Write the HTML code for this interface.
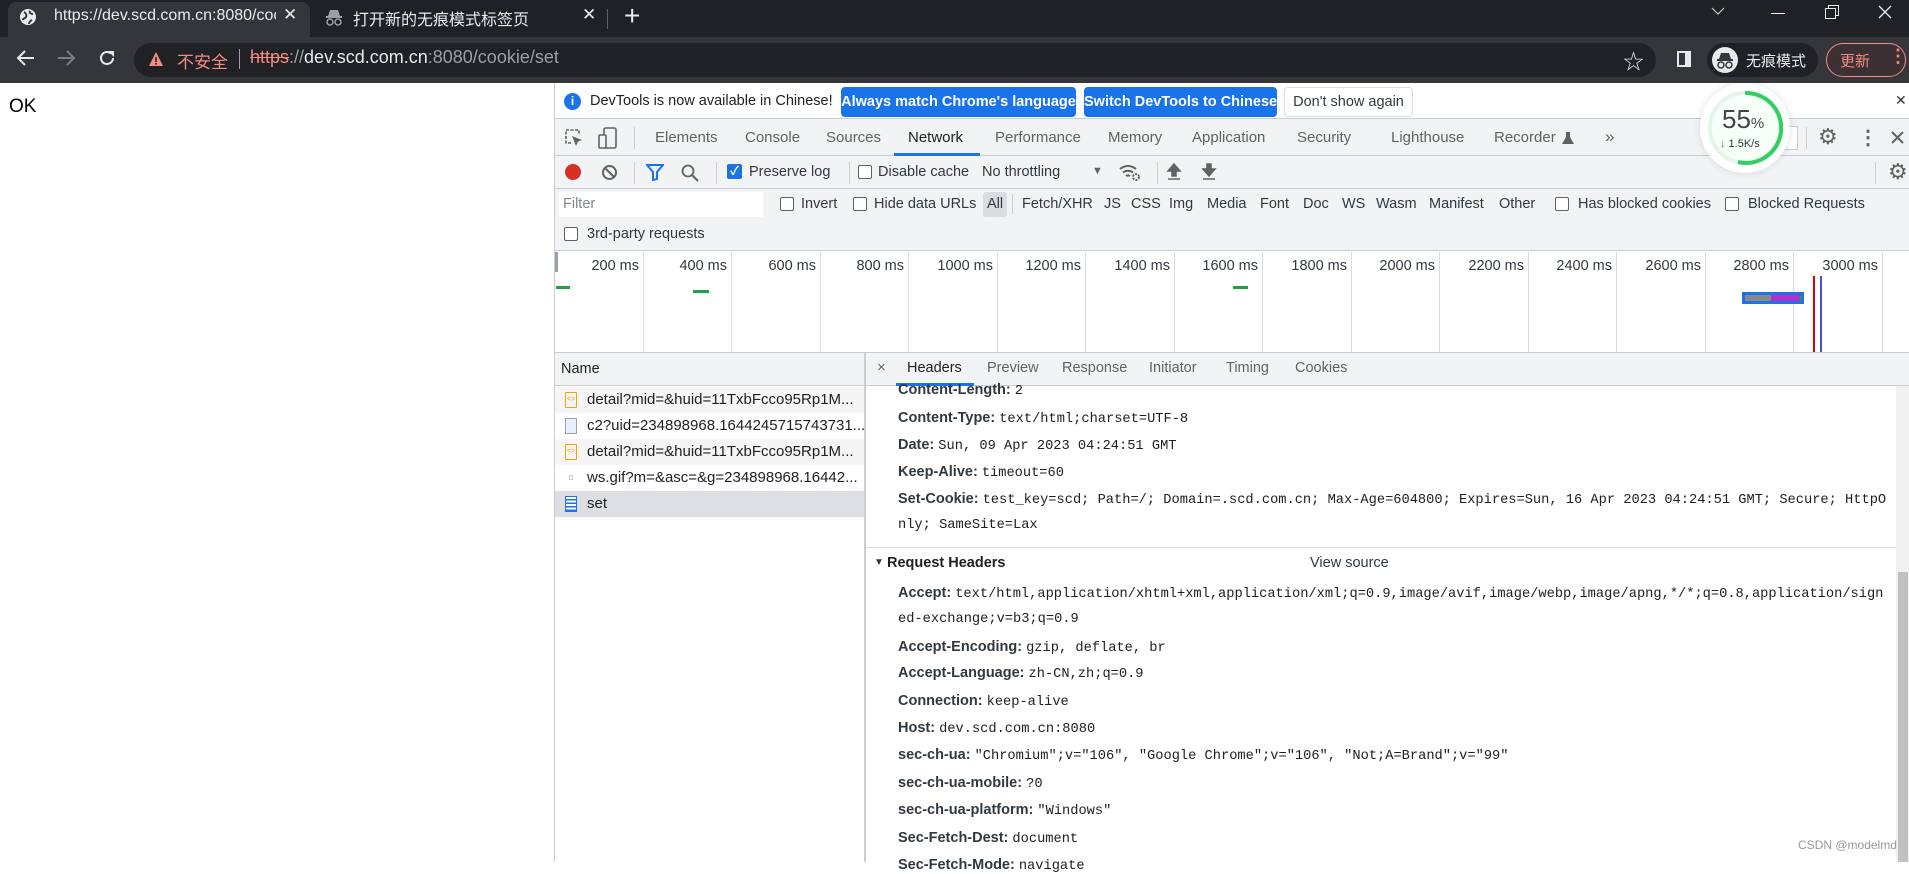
<!DOCTYPE html>
<html><head><meta charset="utf-8"><style>
*{box-sizing:border-box;margin:0;padding:0}
body{width:1909px;height:862px;overflow:hidden;position:relative;background:#fff;font-family:"Liberation Sans","Noto Sans CJK SC",sans-serif;color:#202124}
.a{position:absolute;white-space:nowrap}
.dt{font-size:14.5px;color:#303942}
.tab{font-size:15px;color:#5f6368}
.cb{position:absolute;width:14px;height:14px;border:1.5px solid #5f6368;border-radius:2px;background:#fff}
.hn{font-weight:bold;font-size:14.5px;color:#303942}
.hv{font-family:"Liberation Mono",monospace;font-size:13.7px;color:#202124;font-weight:normal}
.row{position:absolute;left:555px;width:309px;height:26px;font-size:15px;color:#202124;white-space:nowrap;overflow:hidden}
.row span{position:absolute;left:32px;top:4px;white-space:nowrap}
.gl{position:absolute;top:252px;height:100px;width:1px;background:#dadce0}
.tl{position:absolute;top:258px;font-size:14.5px;color:#303942;text-align:right;width:100px}
</style></head><body>
<!-- tab strip -->
<div class="a" style="left:0;top:0;width:1909px;height:37px;background:#202124"></div>
<div class="a" style="left:8px;top:2px;width:302px;height:35px;background:#35363a;border-radius:8px 8px 0 0"></div>
<svg class="a" style="left:19px;top:8px" width="18" height="18" viewBox="0 0 18 18"><circle cx="9" cy="9" r="8" fill="#e8eaed"/><path d="M5 4c2 1 3 3 2 5s-3 1-3 3M11 3c-1 2 1 3 3 3M10 16c0-2 1-3 3-4" stroke="#35363a" stroke-width="2" fill="none"/></svg>
<div class="a" style="left:54px;top:7px;font-size:16px;color:#e8eaed;width:222px;overflow:hidden">https://dev.scd.com.cn:8080/cookie/set</div>
<div class="a" style="left:283px;top:5px;font-size:17px;color:#e8eaed">✕</div>
<svg class="a" style="left:325px;top:9px" width="18" height="17" viewBox="0 0 18 17"><path d="M5 1h8l2 6H3z" fill="#9aa0a6"/><rect x="1" y="7" width="16" height="2" fill="#9aa0a6"/><circle cx="5" cy="13" r="3" stroke="#9aa0a6" stroke-width="1.5" fill="none"/><circle cx="13" cy="13" r="3" stroke="#9aa0a6" stroke-width="1.5" fill="none"/></svg>
<div class="a" style="left:353px;top:6px;font-size:16px;color:#e8eaed">打开新的无痕模式标签页</div>
<div class="a" style="left:582px;top:5px;font-size:17px;color:#e8eaed">✕</div>
<div class="a" style="left:607px;top:9px;width:1px;height:20px;background:#5f6368"></div>
<div class="a" style="left:624px;top:0px;font-size:28px;color:#e8eaed;font-weight:300">+</div>
<svg class="a" style="left:1711px;top:6px" width="14" height="10"><path d="M1 2l6 6 6-6" stroke="#c8c8c8" fill="none" stroke-width="1.2"/></svg>
<div class="a" style="left:1771px;top:13px;width:14px;height:1.3px;background:#e8eaed"></div>
<svg class="a" style="left:1824px;top:4px" width="16" height="16"><rect x="1.5" y="4.5" width="10" height="10" stroke="#e8eaed" fill="none"/><path d="M4.5 4.5V1.5h10v10h-3" stroke="#e8eaed" fill="none"/></svg>
<svg class="a" style="left:1878px;top:5px" width="14" height="14"><path d="M1 1l12 12M13 1L1 13" stroke="#e8eaed" stroke-width="1.3"/></svg>
<!-- toolbar -->
<div class="a" style="left:0;top:37px;width:1909px;height:46px;background:#35363a"></div>
<svg class="a" style="left:16px;top:49px" width="20" height="18"><path d="M18 9H3M9 2L2 9l7 7" stroke="#e8eaed" stroke-width="2" fill="none"/></svg>
<svg class="a" style="left:56px;top:49px" width="20" height="18"><path d="M2 9h15M11 2l7 7-7 7" stroke="#7a7d81" stroke-width="2" fill="none"/></svg>
<svg class="a" style="left:97px;top:48px" width="20" height="20"><path d="M16 10a6 6 0 1 1-2-4.5" stroke="#e8eaed" stroke-width="2" fill="none"/><path d="M11 3h6v6z" fill="#e8eaed"/></svg>
<div class="a" style="left:134px;top:43px;width:1522px;height:34px;background:#202124;border-radius:17px"></div>
<svg class="a" style="left:148px;top:51px" width="16" height="16"><path d="M8 1L15 15H1z" fill="#f28b82"/><rect x="7.2" y="6" width="1.6" height="5" fill="#202124"/><rect x="7.2" y="12" width="1.6" height="1.6" fill="#202124"/></svg>
<div class="a" style="left:177px;top:48px;font-size:17px;color:#f28b82">不安全</div>
<div class="a" style="left:239px;top:49px;width:1px;height:20px;background:#9aa0a6"></div>
<div class="a" style="left:250px;top:47px;font-size:18px;color:#9aa0a6"><span style="color:#f28b82;text-decoration:line-through">https</span>://<span style="color:#e8eaed">dev.scd.com.cn</span>:8080/cookie/set</div>
<div class="a" style="left:1623px;top:46px;font-size:21px;color:#e8eaed">☆</div>
<div class="a" style="left:1677px;top:51px;width:14px;height:16px;border:2px solid #e8eaed;border-right-width:6px"></div>
<div class="a" style="left:1707px;top:43px;width:111px;height:34px;background:#202124;border-radius:17px"></div>
<div class="a" style="left:1712px;top:47px;width:26px;height:26px;background:#e8eaed;border-radius:50%"></div>
<svg class="a" style="left:1716px;top:52px" width="18" height="17" viewBox="0 0 18 17"><path d="M5 1h8l2 6H3z" fill="#35363a"/><rect x="1" y="7" width="16" height="2" fill="#35363a"/><circle cx="5" cy="13" r="3" stroke="#35363a" stroke-width="1.5" fill="none"/><circle cx="13" cy="13" r="3" stroke="#35363a" stroke-width="1.5" fill="none"/></svg>
<div class="a" style="left:1746px;top:50px;font-size:15px;color:#e8eaed">无痕模式</div>
<div class="a" style="left:1826px;top:43px;width:80px;height:34px;border:1.5px solid #f28b82;border-radius:17px;background:#3c3034"></div>
<div class="a" style="left:1840px;top:50px;font-size:15px;color:#f28b82">更新</div>
<div class="a" style="left:1889px;top:46px;font-size:18px;color:#f28b82;font-weight:bold">⋮</div>
<!-- page -->
<div class="a" style="left:9px;top:96px;font-size:19px;color:#000">OK</div>
<div class="a" style="left:554px;top:83px;width:1px;height:779px;background:#cbcdd1"></div>
<!-- devtools -->
<div class="a" style="left:555px;top:83px;width:1354px;height:36px;background:#fff;border-bottom:1px solid #cacdd1"></div>
<div class="a" style="left:564px;top:93px;width:17px;height:17px;border-radius:50%;background:#1a73e8;color:#fff;font-size:12px;font-weight:bold;text-align:center;line-height:17px">i</div>
<div class="a dt" style="left:590px;top:93px;color:#202124">DevTools is now available in Chinese!</div>
<div class="a" style="left:841px;top:87px;width:235px;height:30px;background:#1a73e8;border-radius:4px;color:#fff;font-weight:bold;font-size:14.5px;text-align:center;line-height:30px">Always match Chrome's language</div>
<div class="a" style="left:1084px;top:87px;width:193px;height:30px;background:#1a73e8;border-radius:4px;color:#fff;font-weight:bold;font-size:14.5px;text-align:center;line-height:30px">Switch DevTools to Chinese</div>
<div class="a" style="left:1284px;top:87px;width:129px;height:30px;border:1px solid #dadce0;border-radius:4px;color:#303942;font-size:14.5px;text-align:center;line-height:28px">Don't show again</div>
<div class="a" style="left:1895px;top:92px;font-size:14px;color:#303942">✕</div>
<!-- tabs bar -->
<div class="a" style="left:555px;top:119px;width:1354px;height:37px;background:#f1f3f4;border-bottom:1px solid #cacdd1"></div>
<svg class="a" style="left:564px;top:128px" width="20" height="20"><path d="M7 15H2V2h13v5" stroke="#5f6368" stroke-width="1.6" fill="none" stroke-dasharray="3 1.5"/><path d="M8 8l10 4-4 1.5L12 18z" fill="#5f6368"/></svg>
<svg class="a" style="left:598px;top:127px" width="20" height="22"><rect x="6" y="1" width="12" height="20" rx="1.5" stroke="#5f6368" stroke-width="1.6" fill="none"/><rect x="1" y="8" width="7" height="13" rx="1" stroke="#5f6368" stroke-width="1.6" fill="#f1f3f4"/></svg>
<div class="a" style="left:634px;top:127px;width:1px;height:22px;background:#cacdd1"></div>
<div class="a tab" style="left:655px;top:129px">Elements</div>
<div class="a tab" style="left:745px;top:129px">Console</div>
<div class="a tab" style="left:826px;top:129px">Sources</div>
<div class="a tab" style="left:908px;top:129px;color:#202124">Network</div>
<div class="a" style="left:894px;top:153px;width:86px;height:3px;background:#1a73e8"></div>
<div class="a tab" style="left:995px;top:129px">Performance</div>
<div class="a tab" style="left:1108px;top:129px">Memory</div>
<div class="a tab" style="left:1192px;top:129px">Application</div>
<div class="a tab" style="left:1297px;top:129px">Security</div>
<div class="a tab" style="left:1391px;top:129px">Lighthouse</div>
<div class="a tab" style="left:1494px;top:129px">Recorder</div>
<svg class="a" style="left:1562px;top:131px" width="12" height="14"><path d="M4 1h4v5l4 7H0l4-7z" fill="#5f6368"/></svg>
<div class="a tab" style="left:1605px;top:127px;font-size:17px">»</div>
<div class="a" style="left:1764px;top:126px;width:34px;height:24px;border:1px solid #cacdd1;background:#fff"></div>
<div class="a" style="left:1806px;top:127px;width:1px;height:22px;background:#cacdd1"></div>
<div class="a" style="left:1818px;top:124px;font-size:22px;color:#5f6368">⚙</div>
<div class="a" style="left:1858px;top:125px;font-size:20px;color:#5f6368;font-weight:bold">⋮</div>
<svg class="a" style="left:1891px;top:131px" width="13" height="13"><path d="M1 1l11 11M12 1L1 12" stroke="#5f6368" stroke-width="2"/></svg>
<!-- network toolbar -->
<div class="a" style="left:555px;top:156px;width:1354px;height:33px;background:#f1f3f4;border-bottom:1px solid #cacdd1"></div>
<div class="a" style="left:565px;top:164px;width:16px;height:16px;border-radius:50%;background:#d93025"></div>
<svg class="a" style="left:601px;top:164px" width="17" height="17"><circle cx="8.5" cy="8.5" r="6.5" stroke="#5f6368" stroke-width="2" fill="none"/><path d="M4 4l9 9" stroke="#5f6368" stroke-width="2"/></svg>
<div class="a" style="left:634px;top:162px;width:1px;height:22px;background:#cacdd1"></div>
<svg class="a" style="left:646px;top:164px" width="18" height="17"><path d="M1 1h16l-6 7v7l-4 1V8z" stroke="#1a73e8" stroke-width="2" fill="none"/></svg>
<svg class="a" style="left:681px;top:164px" width="18" height="18"><circle cx="7" cy="7" r="5.5" stroke="#5f6368" stroke-width="1.8" fill="none"/><path d="M11 11l6 6" stroke="#5f6368" stroke-width="2"/></svg>
<div class="a" style="left:716px;top:162px;width:1px;height:22px;background:#cacdd1"></div>
<div class="a" style="left:727px;top:164px;width:15px;height:15px;background:#1a73e8;border-radius:2px;color:#fff;font-size:12px;line-height:15px;text-align:center;font-weight:bold">✓</div>
<div class="a dt" style="left:749px;top:164px">Preserve log</div>
<div class="a" style="left:849px;top:162px;width:1px;height:22px;background:#cacdd1"></div>
<div class="cb" style="left:858px;top:165px"></div>
<div class="a dt" style="left:878px;top:164px">Disable cache</div>
<div class="a dt" style="left:982px;top:164px">No throttling</div>
<div class="a" style="left:1092px;top:165px;font-size:11px;color:#5f6368">▼</div>
<svg class="a" style="left:1118px;top:162px" width="24" height="20"><path d="M2 7a12 12 0 0 1 16 0M5 10.5a8 8 0 0 1 10 0M8 14a3.5 3.5 0 0 1 4 0" stroke="#5f6368" stroke-width="2" fill="none"/><circle cx="18" cy="15" r="3" stroke="#5f6368" stroke-width="2" fill="none" stroke-dasharray="2 1.2"/></svg>
<div class="a" style="left:1157px;top:162px;width:1px;height:22px;background:#cacdd1"></div>
<svg class="a" style="left:1166px;top:163px" width="16" height="18"><path d="M8 1L2 8h4v5h4V8h4z M2 16h12" stroke="#5f6368" stroke-width="1.5" fill="#5f6368"/></svg>
<svg class="a" style="left:1201px;top:163px" width="16" height="18"><path d="M8 13L2 6h4V1h4v5h4z M2 16h12" stroke="#5f6368" stroke-width="1.5" fill="#5f6368"/></svg>
<div class="a" style="left:1875px;top:162px;width:1px;height:22px;background:#cacdd1"></div>
<div class="a" style="left:1888px;top:159px;font-size:22px;color:#5f6368">⚙</div>
<!-- filter rows -->
<div class="a" style="left:555px;top:189px;width:1354px;height:62px;background:#f1f3f4;border-bottom:1px solid #cacdd1"></div>
<div class="a" style="left:559px;top:192px;width:204px;height:25px;background:#fff"></div>
<div class="a dt" style="left:563px;top:196px;color:#80868b">Filter</div>
<div class="cb" style="left:780px;top:197px"></div><div class="a dt" style="left:801px;top:196px">Invert</div>
<div class="cb" style="left:853px;top:197px"></div><div class="a dt" style="left:874px;top:196px">Hide data URLs</div>
<div class="a" style="left:983px;top:192px;width:24px;height:25px;background:#dadce0;border-radius:3px"></div>
<div class="a dt" style="left:987px;top:196px">All</div>
<div class="a" style="left:1012px;top:194px;width:1px;height:20px;background:#cacdd1"></div>
<div class="a dt" style="left:1022px;top:196px">Fetch/XHR</div>
<div class="a dt" style="left:1104px;top:196px">JS</div>
<div class="a dt" style="left:1131px;top:196px">CSS</div>
<div class="a dt" style="left:1169px;top:196px">Img</div>
<div class="a dt" style="left:1207px;top:196px">Media</div>
<div class="a dt" style="left:1260px;top:196px">Font</div>
<div class="a dt" style="left:1303px;top:196px">Doc</div>
<div class="a dt" style="left:1342px;top:196px">WS</div>
<div class="a dt" style="left:1376px;top:196px">Wasm</div>
<div class="a dt" style="left:1429px;top:196px">Manifest</div>
<div class="a dt" style="left:1499px;top:196px">Other</div>
<div class="cb" style="left:1555px;top:197px"></div><div class="a dt" style="left:1578px;top:196px">Has blocked cookies</div>
<div class="cb" style="left:1725px;top:197px"></div><div class="a dt" style="left:1748px;top:196px">Blocked Requests</div>
<div class="cb" style="left:564px;top:227px"></div><div class="a dt" style="left:587px;top:226px">3rd-party requests</div>
<!-- timeline -->
<div class="a" style="left:555px;top:252px;width:3px;height:20px;background:#9aa0a6"></div>
<div class="gl" style="left:643px"></div><div class="gl" style="left:731px"></div><div class="gl" style="left:820px"></div><div class="gl" style="left:908px"></div><div class="gl" style="left:997px"></div><div class="gl" style="left:1085px"></div><div class="gl" style="left:1174px"></div><div class="gl" style="left:1262px"></div><div class="gl" style="left:1351px"></div><div class="gl" style="left:1439px"></div><div class="gl" style="left:1528px"></div><div class="gl" style="left:1616px"></div><div class="gl" style="left:1705px"></div><div class="gl" style="left:1793px"></div><div class="gl" style="left:1882px"></div>
<div class="tl" style="left:539px">200 ms</div><div class="tl" style="left:627px">400 ms</div><div class="tl" style="left:716px">600 ms</div><div class="tl" style="left:804px">800 ms</div><div class="tl" style="left:893px">1000 ms</div><div class="tl" style="left:981px">1200 ms</div><div class="tl" style="left:1070px">1400 ms</div><div class="tl" style="left:1158px">1600 ms</div><div class="tl" style="left:1247px">1800 ms</div><div class="tl" style="left:1335px">2000 ms</div><div class="tl" style="left:1424px">2200 ms</div><div class="tl" style="left:1512px">2400 ms</div><div class="tl" style="left:1601px">2600 ms</div><div class="tl" style="left:1689px">2800 ms</div><div class="tl" style="left:1778px">3000 ms</div>
<div class="a" style="left:556px;top:286px;width:14px;height:3px;background:#1ea446"></div>
<div class="a" style="left:693px;top:290px;width:16px;height:3px;background:#1ea446"></div>
<div class="a" style="left:1233px;top:286px;width:15px;height:3px;background:#1ea446"></div>
<div class="a" style="left:1742px;top:292px;width:62px;height:12px;background:#1a73e8"></div>
<div class="a" style="left:1745px;top:295px;width:26px;height:6px;background:#888"></div>
<div class="a" style="left:1771px;top:295px;width:29px;height:6px;background:#b52fcc"></div>
<div class="a" style="left:1800px;top:295px;width:2px;height:6px;background:#1ea446"></div>
<div class="a" style="left:1813px;top:276px;width:1.5px;height:76px;background:#d00"></div>
<div class="a" style="left:1820px;top:276px;width:1.5px;height:76px;background:#4455cc"></div>
<!-- lower panel -->
<div class="a" style="left:555px;top:352px;width:1354px;height:1px;background:#cacdd1"></div>
<div class="a" style="left:555px;top:353px;width:309px;height:33px;background:#f1f3f4;border-bottom:1px solid #cacdd1"></div>
<div class="a dt" style="left:561px;top:361px;color:#202124">Name</div>
<div class="a" style="left:864px;top:353px;width:2px;height:509px;background:#cacdd1"></div>
<div class="row" style="top:387px;background:#f5f5f5"><span>detail?mid=&amp;huid=11TxbFcco95Rp1M...</span></div>
<div class="row" style="top:413px;background:#fff"><span>c2?uid=234898968.1644245715743731...</span></div>
<div class="row" style="top:439px;background:#f5f5f5"><span>detail?mid=&amp;huid=11TxbFcco95Rp1M...</span></div>
<div class="row" style="top:465px;background:#fff"><span>ws.gif?m=&amp;asc=&amp;g=234898968.16442...</span></div>
<div class="row" style="top:491px;background:#dcdee2"><span>set</span></div>
<div class="a" style="left:565px;top:392px;width:12px;height:16px;border:1.5px solid #f2a600;border-radius:1px;font-size:7px;color:#f2a600;text-align:center;line-height:13px">&lt;&gt;</div>
<div class="a" style="left:565px;top:418px;width:12px;height:16px;border:1.5px solid #9aa0a6;background:#e8f0fe"></div>
<div class="a" style="left:565px;top:444px;width:12px;height:16px;border:1.5px solid #f2a600;border-radius:1px;font-size:7px;color:#f2a600;text-align:center;line-height:13px">&lt;&gt;</div>
<div class="a" style="left:569px;top:475px;width:4px;height:5px;border:1px solid #ccc"></div>
<div class="a" style="left:565px;top:496px;width:12px;height:16px;border:1.5px solid #1a73e8;background:repeating-linear-gradient(#fff 0 2px,#1a73e8 2px 3.5px)"></div>
<!-- details tabs -->
<div class="a" style="left:866px;top:353px;width:1043px;height:33px;background:#f1f3f4;border-bottom:1px solid #cacdd1"></div>
<div class="a" style="left:877px;top:359px;font-size:15px;color:#5f6368">×</div>
<div class="a tab" style="left:907px;top:360px;color:#202124;font-size:14.5px">Headers</div>
<div class="a" style="left:896px;top:383px;width:78px;height:3px;background:#1a73e8"></div>
<div class="a tab" style="left:987px;top:360px;font-size:14.5px">Preview</div>
<div class="a tab" style="left:1062px;top:360px;font-size:14.5px">Response</div>
<div class="a tab" style="left:1149px;top:360px;font-size:14.5px">Initiator</div>
<div class="a tab" style="left:1226px;top:360px;font-size:14.5px">Timing</div>
<div class="a tab" style="left:1295px;top:360px;font-size:14.5px">Cookies</div>
<!-- headers content -->
<div class="a hn" style="left:898px;top:382px">Content-Length: <span class="hv">2</span></div>
<div class="a hn" style="left:898px;top:410px">Content-Type: <span class="hv">text/html;charset=UTF-8</span></div>
<div class="a hn" style="left:898px;top:437px">Date: <span class="hv">Sun, 09 Apr 2023 04:24:51 GMT</span></div>
<div class="a hn" style="left:898px;top:464px">Keep-Alive: <span class="hv">timeout=60</span></div>
<div class="a hn" style="left:898px;top:491px">Set-Cookie: <span class="hv">test_key=scd; Path=/; Domain=.scd.com.cn; Max-Age=604800; Expires=Sun, 16 Apr 2023 04:24:51 GMT; Secure; HttpO</span></div>
<div class="a hv" style="left:898px;top:518px">nly; SameSite=Lax</div>
<div class="a" style="left:866px;top:547px;width:1030px;height:1px;background:#dadce0"></div>
<div class="a" style="left:874px;top:557px;font-size:10px;color:#303942">▼</div>
<div class="a hn" style="left:887px;top:555px;color:#202124">Request Headers</div>
<div class="a dt" style="left:1310px;top:555px">View source</div>
<div class="a hn" style="left:898px;top:585px">Accept: <span class="hv">text/html,application/xhtml+xml,application/xml;q=0.9,image/avif,image/webp,image/apng,*/*;q=0.8,application/sign</span></div>
<div class="a hv" style="left:898px;top:612px">ed-exchange;v=b3;q=0.9</div>
<div class="a hn" style="left:898px;top:639px">Accept-Encoding: <span class="hv">gzip, deflate, br</span></div>
<div class="a hn" style="left:898px;top:665px">Accept-Language: <span class="hv">zh-CN,zh;q=0.9</span></div>
<div class="a hn" style="left:898px;top:693px">Connection: <span class="hv">keep-alive</span></div>
<div class="a hn" style="left:898px;top:720px">Host: <span class="hv">dev.scd.com.cn:8080</span></div>
<div class="a hn" style="left:898px;top:747px">sec-ch-ua: <span class="hv">"Chromium";v="106", "Google Chrome";v="106", "Not;A=Brand";v="99"</span></div>
<div class="a hn" style="left:898px;top:775px">sec-ch-ua-mobile: <span class="hv">?0</span></div>
<div class="a hn" style="left:898px;top:802px">sec-ch-ua-platform: <span class="hv">"Windows"</span></div>
<div class="a hn" style="left:898px;top:830px">Sec-Fetch-Dest: <span class="hv">document</span></div>
<div class="a hn" style="left:898px;top:857px">Sec-Fetch-Mode: <span class="hv">navigate</span></div>
<div class="a" style="left:1896px;top:386px;width:13px;height:476px;background:#f1f1f1"></div>
<div class="a" style="left:1898px;top:572px;width:10px;height:290px;background:#c1c1c1"></div>
<div class="a" style="left:1798px;top:838px;font-size:12px;color:#999">CSDN @modelmd</div>
<!-- perf widget -->
<div class="a" style="left:1700px;top:83px;width:90px;height:90px;border-radius:50%;background:rgba(255,255,255,.9);box-shadow:0 0 8px rgba(0,0,0,.12)"></div>
<svg class="a" style="left:1707px;top:90px" width="76" height="76"><circle cx="38" cy="38" r="35" stroke="#e6f4ea" stroke-width="4" fill="#f6fff8"/><path d="M38 3A35 35 0 1 1 31 72" stroke="#2fd060" stroke-width="4" fill="none"/></svg>
<div class="a" style="left:1722px;top:104px;font-size:26px;color:#444">55<span style="font-size:15px">%</span></div>
<div class="a" style="left:1720px;top:138px;font-size:11px;color:#333"><span style="color:#1ea446">↓</span> 1.5K/s</div>
</body></html>
